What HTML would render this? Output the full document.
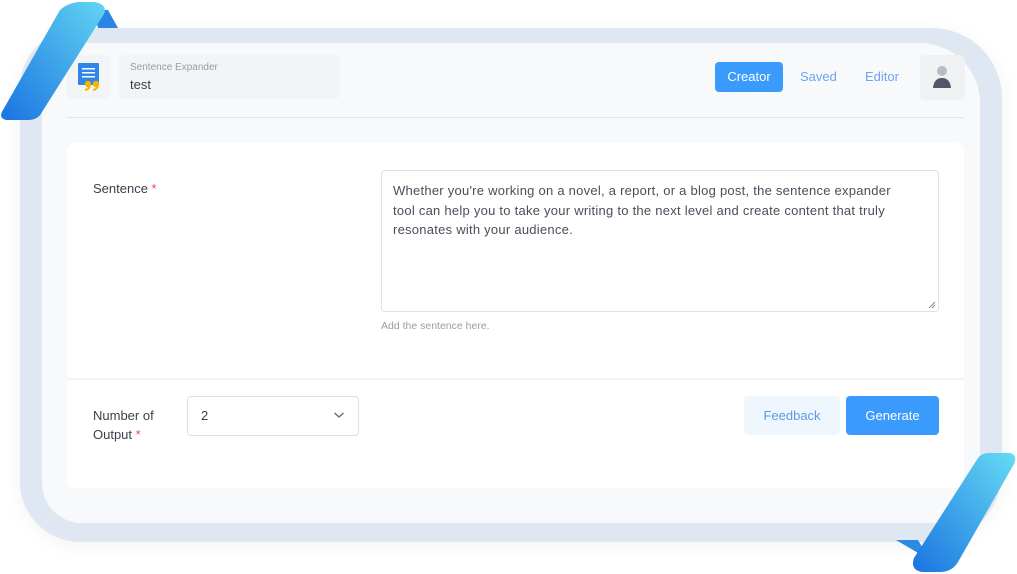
<!DOCTYPE html>
<html><head><meta charset="utf-8"><style>
*{box-sizing:border-box;margin:0;padding:0}
body{width:1017px;height:574px;background:#fff;position:relative;overflow:hidden;font-family:"Liberation Sans",sans-serif}
.frame{position:absolute;left:20px;top:28px;width:982px;height:514px;background:#dfe8f2;border-radius:60px 70px 70px 60px;box-shadow:0 4px 20px rgba(0,0,0,0.05)}
.panel{position:absolute;left:42px;top:43px;width:938px;height:480px;background:#f8f9fa;border-radius:40px 60px 20px 40px}
.abs{position:absolute}
.card{position:absolute;left:67px;top:143px;width:897px;height:345px;background:#fff;border-radius:8px}
</style></head><body>
<div class="frame"></div>
<div class="panel"></div>
<!-- header -->
<div class="abs" style="left:67px;top:55px;width:44px;height:44px;background:#f3f4f6;border-radius:6px"></div>
<svg class="abs" style="left:77px;top:62px" width="26" height="30" viewBox="0 0 26 30">
<rect x="1" y="1" width="21" height="22" rx="1" fill="#2f86e6"/>
<rect x="5" y="6" width="13" height="1.5" fill="#fff"/><rect x="5" y="10" width="13" height="1.5" fill="#fff"/><rect x="5" y="14" width="13" height="1.5" fill="#fff"/>
<circle cx="11" cy="22" r="3.2" fill="#f7b500"/><path d="M13 22 Q13 27 8 28" stroke="#f7b500" stroke-width="2" fill="none"/>
<circle cx="19" cy="22" r="3.2" fill="#f7b500"/><path d="M21 22 Q21 27 16 28" stroke="#f7b500" stroke-width="2" fill="none"/>
</svg>
<div class="abs" style="left:118px;top:55px;width:222px;height:44px;background:#f3f4f6;border-radius:6px"></div>
<div class="abs" style="left:130px;top:62px;font-size:10px;color:#9a9ca3">Sentence Expander</div>
<div class="abs" style="left:130px;top:77px;font-size:13px;color:#3b3f4a">test</div>
<div class="abs" style="left:715px;top:62px;width:68px;height:30px;background:#3a9bfd;border-radius:4px;color:#fff;font-size:13px;text-align:center;line-height:30px">Creator</div>
<div class="abs" style="left:800px;top:69px;font-size:13px;color:#6da4f5">Saved</div>
<div class="abs" style="left:865px;top:69px;font-size:13px;color:#6da4f5">Editor</div>
<div class="abs" style="left:920px;top:55px;width:45px;height:45px;background:#f0f1f3;border-radius:5px"></div>
<svg class="abs" style="left:930px;top:64px" width="24" height="26"><circle cx="12" cy="7" r="5" fill="#b9bcc4"/><path d="M3 24 Q4 14 12 14 Q20 14 21 24 Z" fill="#515669"/></svg>
<div class="abs" style="left:67px;top:117px;width:897px;height:1px;background:#e2e4e8"></div>
<!-- card -->
<div class="card"></div>
<div class="abs" style="left:93px;top:181px;font-size:13px;color:#3b3f4a">Sentence <span style="color:#f04b59">*</span></div>
<div class="abs" style="left:381px;top:170px;width:558px;height:142px;border:1px solid #dde0e6;border-radius:4px;padding:10px 11px;font-size:13px;line-height:19.5px;color:#4a4e5a;letter-spacing:0.25px;white-space:nowrap">Whether you're working on a novel, a report, or a blog post, the sentence expander<br>tool can help you to take your writing to the next level and create content that truly<br>resonates with your audience.</div>
<svg class="abs" style="left:928px;top:301px" width="8" height="8"><path d="M1 7 L7 1 M4 7 L7 4" stroke="#888" stroke-width="1"/></svg>
<div class="abs" style="left:381px;top:320px;font-size:10.5px;color:#9a9ca3">Add the sentence here.</div>
<div class="abs" style="left:67px;top:378px;width:897px;height:2px;background:#f3f4f6"></div>
<div class="abs" style="left:93px;top:406px;font-size:13px;line-height:19px;color:#3b3f4a">Number of<br>Output <span style="color:#f04b59">*</span></div>
<div class="abs" style="left:187px;top:396px;width:172px;height:40px;border:1px solid #dde0e6;border-radius:4px;padding-left:13px;line-height:38px;font-size:13px;color:#3b3f4a">2</div>
<svg class="abs" style="left:333px;top:411px" width="12" height="8"><path d="M1.5 2 L6 6 L10.5 2" stroke="#666" stroke-width="1.3" fill="none"/></svg>
<div class="abs" style="left:744px;top:396px;width:96px;height:39px;background:#eef6fe;border-radius:4px;color:#5c9be8;font-size:13px;text-align:center;line-height:39px">Feedback</div>
<div class="abs" style="left:846px;top:396px;width:93px;height:39px;background:#3a9bfd;border-radius:4px;color:#fff;font-size:13px;text-align:center;line-height:39px">Generate</div>
<!-- ribbons -->
<svg class="abs" style="left:0;top:0" width="125" height="125">
<defs><linearGradient id="g1" x1="0" y1="1" x2="1" y2="0"><stop offset="0" stop-color="#1a74e0"/><stop offset="1" stop-color="#62d4f3"/></linearGradient></defs>
<path d="M94 10 L108 10 L118 28 L98 28 Z" fill="#2a85e5"/>
<path d="M60 10 Q70 1 85 2 L95 2 Q108 5 104 14 L42 112 Q38 120 28 120 L6 120 Q-2 118 3 110 Z" fill="url(#g1)"/>
</svg>
<svg class="abs" style="left:890px;top:450px" width="127" height="124">
<defs><linearGradient id="g2" x1="0" y1="1" x2="1" y2="0"><stop offset="0" stop-color="#1a74e0"/><stop offset="1" stop-color="#66dbf4"/></linearGradient></defs>
<path d="M6 90 L28 90 L40 110 Z" fill="#2e8ae3"/>
<path d="M98 3 L120 3 Q128 5 124 14 L68 112 Q62 122 50 122 L32 122 Q20 120 24 108 L88 8 Q92 3 98 3 Z" fill="url(#g2)"/>
</svg>
</body></html>
